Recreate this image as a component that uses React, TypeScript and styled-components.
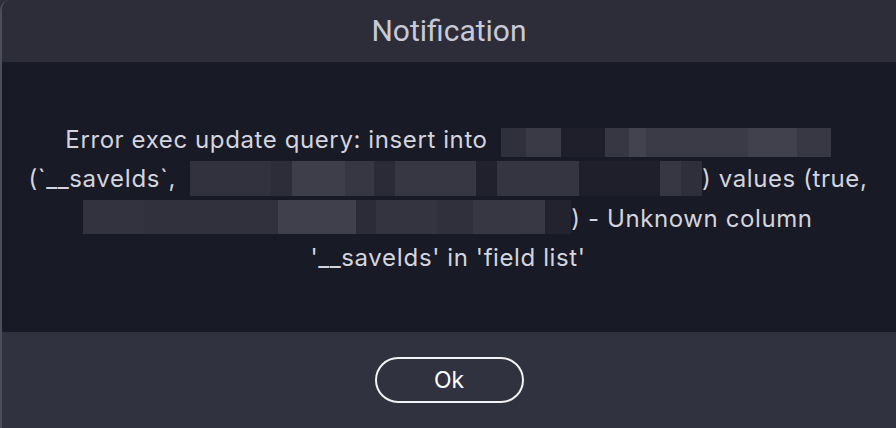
import styled, { createGlobalStyle } from 'styled-components'

interface Piece {
  w: number
  c: string
}

const line1: Piece[] = [
  { w: 25, c: '#2f303b' },
  { w: 35, c: '#393a46' },
  { w: 44, c: '#1e1f2a' },
  { w: 24, c: '#363742' },
  { w: 17, c: '#42434e' },
  { w: 102, c: '#3a3b46' },
  { w: 49, c: '#40414c' },
  { w: 34, c: '#373844' }
]

const line2: Piece[] = [
  { w: 81, c: '#31323d' },
  { w: 21, c: '#2c2d38' },
  { w: 53, c: '#3d3e49' },
  { w: 29, c: '#363742' },
  { w: 21, c: '#2a2b36' },
  { w: 81, c: '#363742' },
  { w: 21, c: '#20212c' },
  { w: 82, c: '#343541' },
  { w: 81, c: '#1e1f2a' },
  { w: 21, c: '#363742' },
  { w: 21, c: '#2e2f3a' }
]

const line3: Piece[] = [
  { w: 61, c: '#32333e' },
  { w: 134, c: '#30313c' },
  { w: 78, c: '#3f404b' },
  { w: 20, c: '#2b2c37' },
  { w: 61, c: '#33343f' },
  { w: 36, c: '#2f303b' },
  { w: 46, c: '#363742' },
  { w: 26, c: '#373843' },
  { w: 26, c: '#22232e' }
]

const GlobalStyle = createGlobalStyle`
  html, body {
    margin: 0;
    padding: 0;
    background: #2d2e3a;
  }
  body {
    font-family: Inter, "Noto Sans", sans-serif;
  }
`

const Dialog = styled.div`
  display: flex;
  flex-direction: column;
  width: 896px;
  height: 428px;
  box-sizing: border-box;
  border-left: 2px solid #4c4e5b;
  border-top-left-radius: 10px;
  overflow: hidden;
`

const Header = styled.div`
  height: 62px;
  background: #2c2d39;
  display: flex;
  justify-content: center;
  align-items: center;
  padding-bottom: 1px;
  box-sizing: border-box;

  h1 {
    margin: 0;
    font-family: Roboto, "Liberation Sans", sans-serif;
    font-weight: 400;
    font-size: 30px;
    color: #c9c9d6;
  }
`

const Body = styled.div`
  height: 270px;
  background: #181a25;
  display: flex;
  align-items: center;
  justify-content: center;
  margin-left: -2px;
  padding-top: 3px;
  box-sizing: border-box;
`

const Message = styled.p`
  margin: 0;
  text-align: center;
  font-size: 24px;
  letter-spacing: 0.6px;
  line-height: 39.5px;
  color: #d4d4de;
  white-space: nowrap;
`

const Redact = styled.span<{ $drop: number; $h: number; $ml: number }>`
  display: inline-flex;
  height: ${p => p.$h}px;
  vertical-align: -${p => p.$drop}px;
  margin-left: ${p => p.$ml}px;
  overflow: hidden;

  span {
    display: block;
    height: 100%;
  }
`

const Footer = styled.div`
  flex: 1;
  background: #30323f;
  display: flex;
  align-items: center;
  justify-content: center;
`

const OkButton = styled.button`
  width: 149px;
  height: 46px;
  border: 2px solid #f2f2f4;
  border-radius: 23px;
  background: transparent;
  color: #ffffff;
  font-family: Inter, "Noto Sans", sans-serif;
  font-size: 23px;
  cursor: pointer;
`

const Block = ({ pieces, drop, h, ml }: { pieces: Piece[]; drop: number; h: number; ml: number }) => (
  <Redact $drop={drop} $h={h} $ml={ml}>
    {pieces.map((p, i) => (
      <span key={i} style={{ width: p.w, background: p.c }} />
    ))}
  </Redact>
)

const App = () => {
  return (
    <>
      <GlobalStyle />
      <Dialog>
        <Header>
          <h1>Notification</h1>
        </Header>
        <Body>
          <Message>
            Error exec update query: insert into
            <Block pieces={line1} drop={9} h={29} ml={13} />
            <br />
            (`__saveIds`,<Block pieces={line2} drop={9} h={35} ml={14} />) values (true,
            <br />
            <Block pieces={line3} drop={7} h={34} ml={0} />) - Unknown column
            <br />
            '__saveIds' in 'field list'
          </Message>
        </Body>
        <Footer>
          <OkButton>Ok</OkButton>
        </Footer>
      </Dialog>
    </>
  )
}

export default App
